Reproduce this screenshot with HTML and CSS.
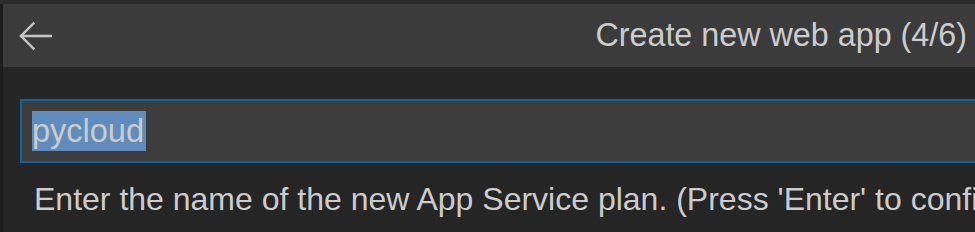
FILE: index.html
```html
<!DOCTYPE html>
<html lang="en">
<head>
    <meta charset="UTF-8">
    <meta name="viewport" content="width=device-width, initial-scale=1.0">
    <title>Create new web app</title>
    <link rel="stylesheet" href="styles.css">
</head>
<body>
    <div class="top-strip"></div>
    <div class="quick-input">
        <header class="title-bar">
            <button class="back-btn" aria-label="Back">
                <svg width="33" height="32" viewBox="0 0 33 32">
                    <path d="M2 16 H32 M14.5 3.5 L2 16 L14.5 28.5" fill="none" stroke="#c5c5c5" stroke-width="2.4" stroke-linecap="square"/>
                </svg>
            </button>
            <h1 class="title">Create new web app (4/6)</h1>
        </header>
        <div class="body">
            <div class="input-box"><span class="selected">pycloud</span></div>
            <p class="message">Enter the name of the new App Service plan. (Press 'Enter' to confirm or 'Escape' to cancel)</p>
        </div>
    </div>
</body>
</html>
```

FILE: styles.css
```css
body {
    margin: 0;
    padding: 0;
    width: 975px;
    height: 232px;
    overflow: hidden;
    background-color: #252526;
    font-family: 'Liberation Sans', Arial, sans-serif;
    color: #cccccc;
}

.top-strip {
    height: 4px;
    background-color: #2b2b2b;
}

.quick-input {
    border-left: 3px solid #1c1c1c;
    height: 228px;
    overflow: hidden;
}

.title-bar {
    display: flex;
    align-items: center;
    height: 63px;
    background-color: #3b3b3b;
    padding: 0 8px 0 16px;
}

.back-btn {
    background: none;
    border: none;
    padding: 0;
    margin: 0;
    width: 33px;
    height: 32px;
    cursor: pointer;
}

.back-btn svg {
    display: block;
}

.title {
    margin: 0 0 0 auto;
    font-size: 32.3px;
    font-weight: normal;
    line-height: 63px;
    color: #cccccc;
    white-space: nowrap;
}

.body {
    padding: 32px 0 0 17px;
}

.input-box {
    border: 2px solid #0f64a0;
    border-right: none;
    background-color: #3c3c3c;
    padding: 10px 0 10px 10px;
    height: 40px;
    font-size: 32.5px;
    line-height: 40px;
    color: #cccccc;
    margin-right: -40px;
}

.selected {
    display: inline-block;
    background-color: #5f8cbd;
    padding-right: 2px;
}

.message {
    margin: 16px 0 0 14px;
    font-size: 32px;
    line-height: 40px;
    white-space: nowrap;
    color: #cccccc;
}
```
